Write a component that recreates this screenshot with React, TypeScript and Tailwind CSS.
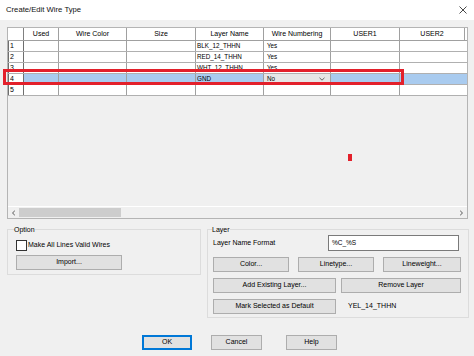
import React from 'react';

const colW = ['w-[16px]', 'w-[35px]', 'w-[68px]', 'w-[69px]', 'w-[68px]', 'w-[67px]', 'w-[69px]', 'w-[65px]'];
const headers = ['', 'Used', 'Wire Color', 'Size', 'Layer Name', 'Wire Numbering', 'USER1', 'USER2'];

interface Row {
  n: string;
  layer: string;
  numbering: string;
}

const rows: Row[] = [
  { n: '1', layer: 'BLK_12_THHN', numbering: 'Yes' },
  { n: '2', layer: 'RED_14_THHN', numbering: 'Yes' },
  { n: '3', layer: 'WHT_12_THHN', numbering: 'Yes' },
  { n: '4', layer: 'GND', numbering: 'No' },
  { n: '5', layer: '', numbering: '' },
];

const Btn: React.FC<{ w: string; children: React.ReactNode; primary?: boolean }> = ({ w, children, primary }) => (
  <div
    className={`${w} h-[15px] flex items-center justify-center bg-[#e1e1e1] text-[7px] text-black ${
      primary ? 'border-2 border-[#0078d7]' : 'border border-[#adadad]'
    }`}
  >
    {children}
  </div>
);

const App: React.FC = () => {
  return (
    <div
      className="relative w-[474px] h-[356px] bg-[#f0f0f0] overflow-hidden text-black"
      style={{ fontFamily: '"Liberation Sans", Arial, sans-serif' }}
    >
      {/* Title bar */}
      <div className="h-[20px] bg-white flex items-center justify-between pl-[6px] pr-[7px]">
        <span className="text-[7.7px] text-[#111]">Create/Edit Wire Type</span>
        <svg width="8" height="8" viewBox="0 0 8 8">
          <path d="M0.5 0.5 L7.5 7.5 M7.5 0.5 L0.5 7.5" stroke="#333" strokeWidth="0.9" />
        </svg>
      </div>

      {/* Grid */}
      <div className="ml-[7px] mt-[7px] w-[461px] h-[192px] border border-[#b4b4b4] bg-[#f0f0f0] flex flex-col">
        <div className="flex h-[13px] bg-white border-b border-[#a0a0a0]">
          {headers.map((h, i) => (
            <div
              key={i}
              className={`${colW[i]} h-full flex items-center justify-center text-[7px] border-r ${
                i === 0 ? 'border-[#808080]' : 'border-[#a0a0a0]'
              }`}
            >
              {h}
            </div>
          ))}
        </div>
        {rows.map((r, ri) => {
          const sel = ri === 3;
          return (
            <div key={r.n} className={`flex h-[11px] border-b border-[#b0b0b0] ${sel ? 'bg-[#a9cbef]' : 'bg-white'}`}>
              <div className="w-[16px] h-full bg-white border-r border-l border-[#6e6e6e] pl-[1px] text-[7px] leading-[10px]">
                {r.n}
              </div>
              <div className="w-[35px] h-full border-r border-[#a0a0a0]" />
              <div className="w-[68px] h-full border-r border-[#a0a0a0]" />
              <div className="w-[69px] h-full border-r border-[#a0a0a0]" />
              <div className="w-[68px] h-full border-r border-[#a0a0a0] pl-[1px] text-[6.3px] leading-[10px]">
                {r.layer}
              </div>
              {sel ? (
                <div className="w-[67px] h-full border-r border-[#a0a0a0] bg-[#e6e6e6] flex items-center justify-between pl-[3px] pr-[5px] text-[6.3px]">
                  <span>{r.numbering}</span>
                  <svg width="6" height="4" viewBox="0 0 6 4">
                    <path d="M0.5 0.8 L3 3.2 L5.5 0.8" fill="none" stroke="#444" strokeWidth="0.8" />
                  </svg>
                </div>
              ) : (
                <div className="w-[67px] h-full border-r border-[#a0a0a0] pl-[3px] text-[6.3px] leading-[10px]">
                  {r.numbering}
                </div>
              )}
              <div className="w-[69px] h-full border-r border-[#a0a0a0]" />
              <div className="w-[65px] h-full" />
            </div>
          );
        })}
        <div className="flex-1" />
        {/* horizontal scrollbar */}
        <div className="h-[12px] border-t border-white flex items-center pl-[3px] pr-[3px]">
          <svg width="5" height="6" viewBox="0 0 5 6">
            <path d="M3.8 0.8 L1.5 3 L3.8 5.2" fill="none" stroke="#555" strokeWidth="1" />
          </svg>
          <div className="ml-[3px] w-[102px] h-[9px] bg-[#cdcdcd]" />
          <div className="flex-1" />
          <svg width="5" height="6" viewBox="0 0 5 6">
            <path d="M1.2 0.8 L3.5 3 L1.2 5.2" fill="none" stroke="#555" strokeWidth="1" />
          </svg>
        </div>
      </div>

      {/* Option / Layer groups */}
      <div className="flex items-start mt-[6px]">
        <fieldset className="ml-[7px] w-[194px] h-[50px] border border-[#dcdcdc] pl-[8px] pr-[8px]">
          <legend className="text-[7px] leading-[9px] px-0 ml-[-2px]">Option</legend>
          <div className="flex items-center mt-[6px] h-[11px]">
            <div className="w-[11px] h-[11px] border border-[#333] bg-white" />
            <span className="ml-[1px] text-[7px]">Make All Lines Valid Wires</span>
          </div>
          <div className="mt-[4px]">
            <Btn w="w-[106px]">Import...</Btn>
          </div>
        </fieldset>

        <fieldset className="ml-[6px] w-[262px] h-[93px] border border-[#dcdcdc] pl-[5px]">
          <legend className="text-[7px] leading-[9px] ml-[-1px]">Layer</legend>
          <div className="flex items-center h-[16px] mt-[1px]">
            <span className="w-[115px] text-[7px]">Layer Name Format</span>
            <div className="w-[131px] h-[16px] bg-white border border-[#7a7a7a] flex items-center pl-[3px] text-[6.5px]">
              %C_%S
            </div>
          </div>
          <div className="flex mt-[6px] gap-x-[9px]">
            <Btn w="w-[76px]">Color...</Btn>
            <Btn w="w-[76px]">Linetype...</Btn>
            <Btn w="w-[78px]">Lineweight...</Btn>
          </div>
          <div className="flex mt-[6px] gap-x-[5px]">
            <Btn w="w-[123px]">Add Existing Layer...</Btn>
            <Btn w="w-[120px]">Remove Layer</Btn>
          </div>
          <div className="flex items-center mt-[6px]">
            <Btn w="w-[123px]">Mark Selected as Default</Btn>
            <span className="ml-[12px] text-[7px]">YEL_14_THHN</span>
          </div>
        </fieldset>
      </div>

      {/* Dialog buttons */}
      <div className="flex mt-[17px] pl-[142px]">
        <Btn w="w-[50px]" primary>
          OK
        </Btn>
        <div className="ml-[19px]">
          <Btn w="w-[51px]">Cancel</Btn>
        </div>
        <div className="ml-[24px]">
          <Btn w="w-[51px]">Help</Btn>
        </div>
      </div>

      {/* red annotation marks */}
      <div className="absolute left-[3px] top-[69px] w-[401px] h-[16px] border-[3px] border-[#e3202b]" />
      <div className="absolute left-[348px] top-[154px] w-[4px] h-[7px] bg-[#e3202b]" />
    </div>
  );
};

export default App;
